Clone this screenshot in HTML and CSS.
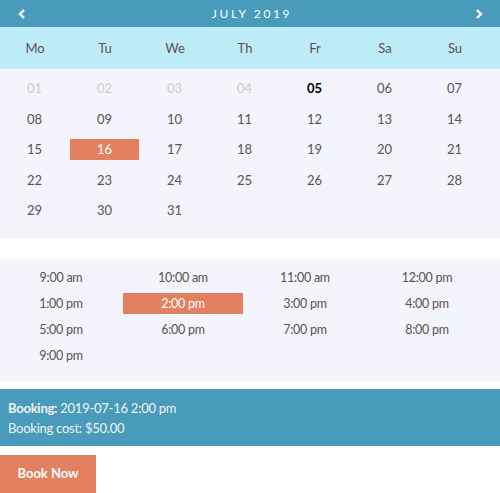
FILE: index.html
```html
<!DOCTYPE html>
<html>
<head>
<meta charset="utf-8">
<link rel="stylesheet" href="styles.css">
</head>
<body>
<div class="calendar">
  <div class="cal-header">
    <span class="nav"><svg width="8" height="10" viewBox="0 0 8 10"><polyline points="6,1 2,5 6,9" fill="none" stroke="#fff" stroke-width="2.4"/></svg></span>
    <span class="title">JULY 2019</span>
    <span class="nav"><svg width="8" height="10" viewBox="0 0 8 10"><polyline points="2,1 6,5 2,9" fill="none" stroke="#fff" stroke-width="2.4"/></svg></span>
  </div>
  <div class="weekdays">
    <span>Mo</span><span>Tu</span><span>We</span><span>Th</span><span>Fr</span><span>Sa</span><span>Su</span>
  </div>
  <div class="days">
    <span class="past">01</span><span class="past">02</span><span class="past">03</span><span class="past">04</span><span class="today">05</span><span>06</span><span>07</span>
    <span>08</span><span>09</span><span>10</span><span>11</span><span>12</span><span>13</span><span>14</span>
    <span>15</span><span class="selected">16</span><span>17</span><span>18</span><span>19</span><span>20</span><span>21</span>
    <span>22</span><span>23</span><span>24</span><span>25</span><span>26</span><span>27</span><span>28</span>
    <span>29</span><span>30</span><span>31</span>
  </div>
</div>
<div class="times">
  <span>9:00 am</span><span>10:00 am</span><span>11:00 am</span><span>12:00 pm</span>
  <span>1:00 pm</span><span class="selected">2:00 pm</span><span>3:00 pm</span><span>4:00 pm</span>
  <span>5:00 pm</span><span>6:00 pm</span><span>7:00 pm</span><span>8:00 pm</span>
  <span>9:00 pm</span>
</div>
<div class="booking">
  <div><b>Booking:</b> 2019-07-16 2:00 pm</div>
  <div>Booking cost: $50.00</div>
</div>
<button class="book-btn">Book Now</button>
</body>
</html>
```
FILE: styles.css
```css
html, body {
  margin: 0;
  padding: 0;
  background: #ffffff;
}
body {
  width: 500px;
  font-family: Lato, "Open Sans", "Liberation Sans", sans-serif;
  font-size: 13px;
  color: #5b5151;
}
.cal-header {
  height: 27px;
  background: #489bba;
  display: flex;
  align-items: center;
  justify-content: space-between;
  padding: 0 17px 0 18px;
  color: #ffffff;
}
.nav {
  display: flex;
  align-items: center;
  height: 10px;
}
.title {
  font-size: 12px;
  letter-spacing: 2.6px;
  padding-left: 3px;
}
.weekdays {
  height: 42px;
  background: #bdebf7;
  display: grid;
  grid-template-columns: repeat(7, 70px);
  align-items: center;
  text-align: center;
}
.days {
  background: #f4f4fd;
  display: grid;
  grid-template-columns: repeat(7, 70px);
  grid-auto-rows: 21px;
  row-gap: 9.5px;
  padding: 8.5px 0 17px;
}
.days span {
  display: flex;
  align-items: center;
  justify-content: center;
  width: 69px;
}
.days .past {
  color: #cfcccc;
}
.days .today {
  color: #000000;
  font-weight: bold;
}
.selected {
  background: #e2805f;
  color: #ffffff;
}
.times {
  margin-top: 21px;
  background: #f4f4fd;
  display: grid;
  grid-template-columns: repeat(4, 122px);
  grid-auto-rows: 21px;
  row-gap: 5.3px;
  padding: 8px 12px 15px 0;
  font-size: 12.5px;
  letter-spacing: -0.25px;
}
.times span {
  margin: 0 1px;
  display: flex;
  align-items: center;
  justify-content: center;
}
.booking {
  margin-top: 8px;
  background: #489bba;
  color: #f2f2f2;
  height: 57px;
  padding: 9px 8px 0;
  box-sizing: border-box;
  line-height: 20px;
  letter-spacing: -0.25px;
}
.booking b {
  font-weight: bold;
}
.book-btn {
  display: block;
  margin-top: 9px;
  width: 96px;
  height: 40px;
  border: none;
  background: #e2805f;
  color: #ffffff;
  font-family: inherit;
  font-size: 13px;
  font-weight: bold;
  padding: 0 0 4px;
}
```
